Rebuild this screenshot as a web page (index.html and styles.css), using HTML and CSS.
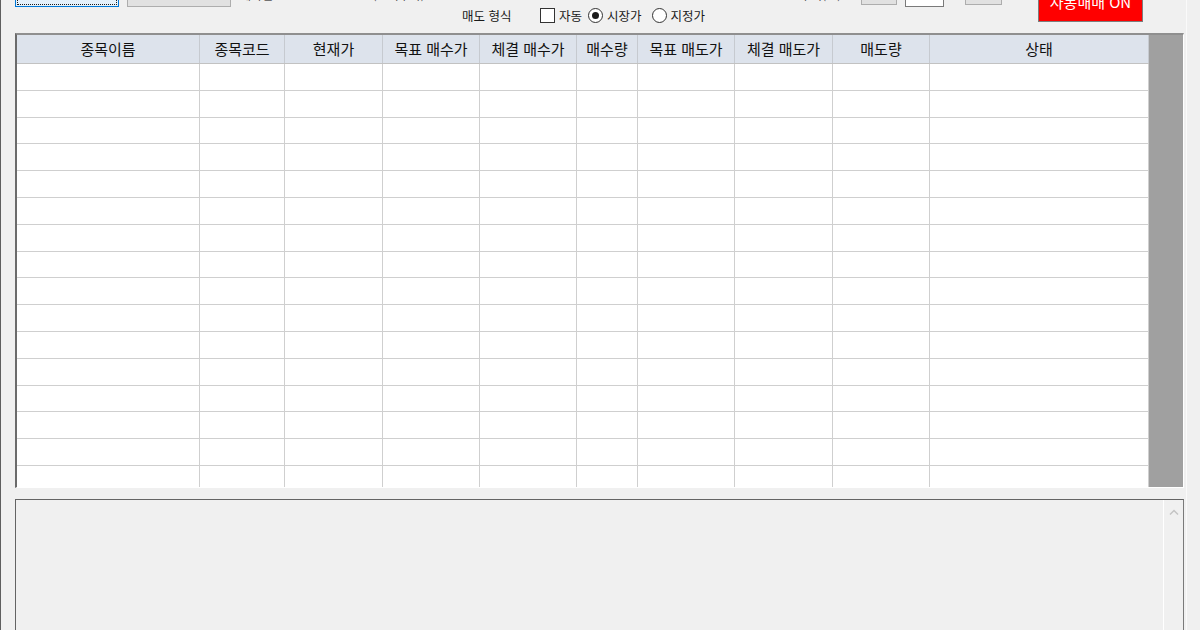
FILE: index.html
```html
<!DOCTYPE html>
<html lang="ko">
<head>
    <meta charset="UTF-8">
    <title>자동매매</title>
    <link rel="stylesheet" href="styles.css">
</head>
<body>
    <div class="window">
        <div class="toolbar">
            <button class="win-button focused">로그인</button>
            <button class="win-button second">조회</button>
            <span class="cut-text account">계좌번호 : 8012-3456-01 (모의투자) 예수금 : 10,000,000원</span>

            <div class="sell-type">
                <span class="label">매도 형식</span>
                <span class="checkbox"></span>
                <span class="opt-text">자동</span>
                <span class="radio checked"></span>
                <span class="opt-text">시장가</span>
                <span class="radio gap"></span>
                <span class="opt-text">지정가</span>
            </div>

            <span class="cut-text interval">주기(초)</span>
            <button class="win-button small">-</button>
            <span class="textbox"></span>
            <button class="win-button small wide">+</button>
            <button class="auto-button">자동매매 ON</button>
        </div>

        <div class="grid">
            <div class="grid-head">
                <div class="cell">종목이름</div>
                <div class="cell">종목코드</div>
                <div class="cell">현재가</div>
                <div class="cell">목표 매수가</div>
                <div class="cell">체결 매수가</div>
                <div class="cell">매수량</div>
                <div class="cell">목표 매도가</div>
                <div class="cell">체결 매도가</div>
                <div class="cell">매도량</div>
                <div class="cell">상태</div>
            </div>
            <div id="gridBody"></div>
        </div>

        <div class="log">
            <div class="log-scroll">
                <svg class="arrow-up" width="10" height="6" viewBox="0 0 10 6">
                    <path d="M1 5.5 L5 1.5 L9 5.5" fill="none" stroke="#c4c4c4" stroke-width="1.5"/>
                </svg>
            </div>
        </div>
    </div>

    <script>
        // empty rows for the grid
        const gridBody = document.getElementById('gridBody');
        for (let i = 0; i < 16; i++) {
            const row = document.createElement('div');
            row.className = 'grid-row';
            for (let j = 0; j < 10; j++) {
                const cell = document.createElement('div');
                cell.className = 'cell';
                row.appendChild(cell);
            }
            gridBody.appendChild(row);
        }
    </script>
</body>
</html>
```

FILE: styles.css
```css
:root {
    --form-bg: #f0f0f0;
    --grid-line: #cfcfcf;
    --head-bg: #dde3ec;
    --dark-border: #6b6b6b;
}

body {
    margin: 0;
    background-color: var(--form-bg);
    font-family: 'Noto Sans CJK KR', 'Malgun Gothic', sans-serif;
    overflow: hidden;
}

.window {
    width: 1187px;
    height: 630px;
    border-left: 1px solid #5f5f5f;
    border-right: 1px solid #fafafa;
    padding-left: 14px;
    box-sizing: border-box;
}

/* top controls, cut off by the screenshot edge */
.toolbar {
    display: flex;
    align-items: flex-start;
    height: 33px;
}

.win-button {
    width: 104px;
    height: 30px;
    margin-top: -23px;
    padding: 0 0 12px;
    background-color: #e1e1e1;
    border: 1px solid #adadad;
    font-family: inherit;
    font-size: 12px;
    line-height: 14px;
    flex-shrink: 0;
}

.win-button.focused {
    background-color: #e5f1fb;
    border-color: #0078d7;
    outline: 1px dotted #1a1a1a;
    outline-offset: -3px;
}

.win-button.second {
    margin-left: 8px;
}

.win-button.small {
    width: 36px;
    margin-left: 11px;
    margin-top: -25px;
}

.win-button.wide {
    width: 37px;
    margin-left: 21px;
}

.cut-text {
    font-size: 12px;
    line-height: 15px;
    color: #555;
    margin-top: -13px;
    white-space: nowrap;
    overflow: hidden;
    flex-shrink: 0;
}

.account {
    width: 190px;
    margin-left: 9px;
}

.interval {
    width: 50px;
    margin-left: 78px;
}

.sell-type {
    display: flex;
    align-items: center;
    width: 260px;
    height: 16px;
    margin-top: 7px;
    margin-left: 32px;
    font-size: 12.5px;
    color: #1a1a1a;
    flex-shrink: 0;
}

.sell-type .label {
    width: 78px;
}

.checkbox {
    width: 13px;
    height: 13px;
    border: 1px solid #333;
    background-color: #fff;
}

.radio {
    width: 13px;
    height: 13px;
    border: 1px solid #333;
    border-radius: 50%;
    background-color: #fff;
    margin-left: 6px;
    display: flex;
    align-items: center;
    justify-content: center;
}

.radio.checked::after {
    content: '';
    width: 7px;
    height: 7px;
    border-radius: 50%;
    background-color: #1a1a1a;
}

.radio.gap {
    margin-left: 10px;
}

.opt-text {
    margin-left: 4px;
}

.textbox {
    width: 39px;
    height: 23px;
    margin-left: 8px;
    margin-top: -16px;
    background-color: #fff;
    border: 1px solid #7a7a7a;
    box-sizing: border-box;
    flex-shrink: 0;
}

.auto-button {
    width: 105px;
    height: 40px;
    margin-top: -18px;
    margin-left: 36px;
    padding: 0 0 11px;
    display: flex;
    align-items: flex-end;
    justify-content: center;
    background-color: #ff0000;
    border: 1px solid #7d7d7d;
    color: #fff;
    font-family: inherit;
    font-size: 15px;
    line-height: 16px;
    flex-shrink: 0;
    overflow: hidden;
}

/* data grid */
.grid {
    width: 1169px;
    height: 455px;
    box-sizing: border-box;
    background-color: #a0a0a0;
    border-top: 2px solid #8f8f8f;
    border-left: 2px solid var(--dark-border);
    border-right: 1px solid #fff;
    border-bottom: 1px solid #fff;
    overflow: hidden;
}

.grid-head,
.grid-row {
    display: grid;
    grid-template-columns: 183px 85px 98px 97px 97px 61px 97px 98px 97px 219px;
    width: 1132px;
    box-sizing: border-box;
}

.grid-head {
    height: 29px;
    background-color: var(--head-bg);
    border-bottom: 1px solid #c2c2c2;
}

.grid-head .cell {
    border-right: 1px solid #c6cad0;
    text-align: center;
    font-size: 15px;
    line-height: 27px;
    color: #111;
    white-space: nowrap;
}

.grid-row {
    height: 26.8px;
    background-color: #fff;
    border-bottom: 1px solid var(--grid-line);
}

.grid-row .cell {
    border-right: 1px solid var(--grid-line);
}

/* log box */
.log {
    width: 1169px;
    height: 150px;
    margin-top: 11px;
    box-sizing: border-box;
    border: 1px solid #7a7a7a;
    border-top-color: #646464;
    border-left-color: #646464;
    background-color: var(--form-bg);
    display: flex;
    justify-content: flex-end;
}

.log-scroll {
    width: 20px;
    border-left: 1px solid #fff;
    display: flex;
    justify-content: center;
    padding-top: 9px;
    box-sizing: border-box;
}

.arrow-up {
    display: block;
}
```
